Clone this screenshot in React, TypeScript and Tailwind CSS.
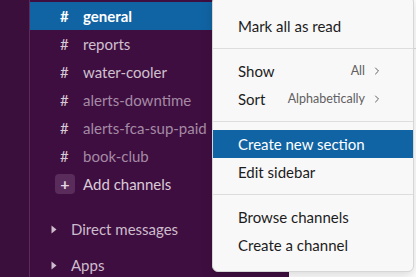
import { ChevronRight } from 'lucide-react'

const font = { fontFamily: 'Lato, "Noto Sans", sans-serif' }

type Channel = { name: string; tone: 'active' | 'normal' | 'muted' }

const channels: Channel[] = [
  { name: 'general', tone: 'active' },
  { name: 'reports', tone: 'normal' },
  { name: 'water-cooler', tone: 'normal' },
  { name: 'alerts-downtime', tone: 'muted' },
  { name: 'alerts-fca-sup-paid', tone: 'muted' },
  { name: 'book-club', tone: 'muted' },
]

function ChannelRow({ channel }: { channel: Channel }) {
  const active = channel.tone === 'active'
  return (
    <div
      className={`flex h-[28px] items-center pl-[30px] text-[15px] ${
        active ? 'bg-[#1164a3] font-bold text-white' : ''
      }`}
    >
      <span className={`w-[23px] ${active ? 'text-white' : 'text-[#d8cbd8]'}`}>#</span>
      <span
        className={
          active ? 'text-white' : channel.tone === 'normal' ? 'text-[#cfc0cf]' : 'text-[#a48aa5]'
        }
      >
        {channel.name}
      </span>
    </div>
  )
}

function Caret() {
  return (
    <svg width="6" height="9" viewBox="0 0 6 9" className="mr-[14px]">
      <path d="M0.5 0.5 L5.5 4.5 L0.5 8.5 Z" fill="#cdbccd" />
    </svg>
  )
}

function MenuItem({ label, value, active }: { label: string; value?: string; active?: boolean }) {
  return (
    <div
      className={`flex h-[28px] items-center justify-between pl-[25px] pr-[30px] text-[15px] ${
        active ? 'bg-[#1164a3] text-white' : 'text-[#1d1c1d]'
      }`}
    >
      <span>{label}</span>
      {value && (
        <span className="flex items-center gap-[6px] text-[12.5px] text-[#616061]">
          {value}
          <ChevronRight size={12} strokeWidth={2} />
        </span>
      )}
    </div>
  )
}

function Divider() {
  return <div className="my-[8px] h-px bg-[#dddddd]" />
}

export default function App() {
  return (
    <div className="relative flex h-[277px] w-[416px] overflow-hidden" style={font}>
      <div className="w-[30px] border-r border-[#5a2b5b] bg-[#3b0f3c]" />
      <div className="w-[259px] bg-[#3f0e40] pt-[2px]">
        {channels.map((c) => (
          <ChannelRow key={c.name} channel={c} />
        ))}
        <div className="flex h-[28px] items-center pl-[25px] text-[15px] text-[#d9cbd9]">
          <span className="mr-[8px] flex h-[20px] w-[20px] items-center justify-center rounded-[4px] bg-[#5a2c5b] text-[16px] font-bold text-[#e4d8e4]">
            +
          </span>
          Add channels
        </div>
        <div className="mt-[17px] flex h-[28px] items-center pl-[21px] text-[15px] text-[#cdbccd]">
          <Caret />
          Direct messages
        </div>
        <div className="mt-[8px] flex h-[28px] items-center pl-[21px] text-[15px] text-[#cdbccd]">
          <Caret />
          Apps
        </div>
      </div>
      <div className="flex-1 bg-white">
        <div className="mt-[48px] h-px bg-[#dddddd]" />
      </div>

      <div className="absolute left-[212px] top-[-4px] h-[276px] w-[202px] rounded-[6px] border border-[#d6d6d6] bg-[#f8f8f8] pt-[15px] shadow-[0_4px_12px_rgba(0,0,0,0.15)]">
        <MenuItem label="Mark all as read" />
        <Divider />
        <MenuItem label="Show" value="All" />
        <MenuItem label="Sort" value="Alphabetically" />
        <Divider />
        <MenuItem label="Create new section" active />
        <MenuItem label="Edit sidebar" />
        <Divider />
        <MenuItem label="Browse channels" />
        <MenuItem label="Create a channel" />
      </div>
    </div>
  )
}
